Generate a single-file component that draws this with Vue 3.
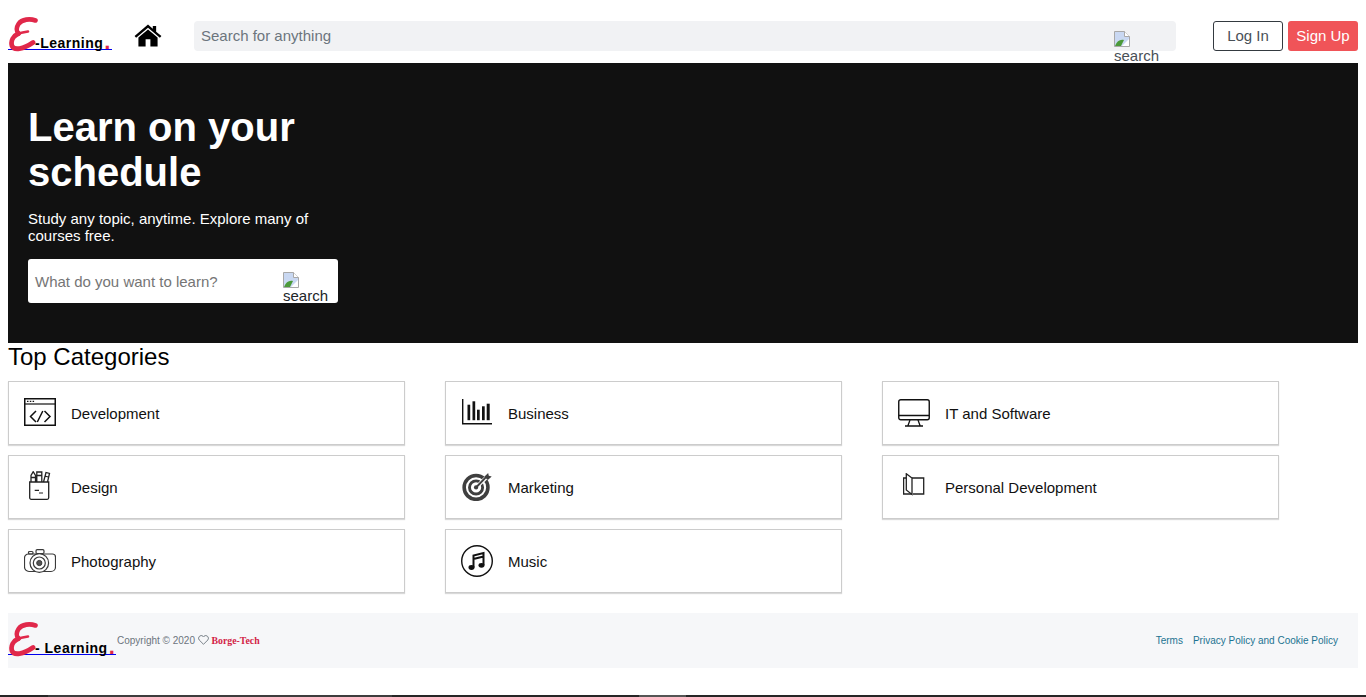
<script setup>
const categories = [
  { name: 'Development', icon: 'dev' },
  { name: 'Business', icon: 'biz' },
  { name: 'IT and Software', icon: 'it' },
  { name: 'Design', icon: 'design' },
  { name: 'Marketing', icon: 'mkt' },
  { name: 'Personal Development', icon: 'book' },
  { name: 'Photography', icon: 'photo' },
  { name: 'Music', icon: 'music' },
]
</script>

<template>
  <div class="page">
    <header class="nav">
      <a class="brand">
        <svg class="mark" viewBox="0 0 29 35" width="29" height="35">
          <g fill="none" stroke="#e0284a" stroke-linecap="round" stroke-linejoin="round">
            <path d="M26.500 3.500C21 1.500 13 2 9.500 7C7.500 10 7 14 9.500 16.500" stroke-width="4.600" />
            <path d="M9.500 16.500C13 15.500 16 15 19 14.500" stroke-width="2.600" />
            <path d="M9.500 16.500C4 19 1.500 24 3 29C5 33.500 14 32.500 24 25.500" stroke-width="4.800" />
          </g>
        </svg>
        <span class="word">-Learning</span><span class="dot">.</span>
      </a>
      <svg class="home" viewBox="0 0 28 24" width="28" height="23">
        <path d="M14 .5 0 12.500l1.600 1.900L14 4l12.400 10.400 1.600-1.900L22.500 8V2h-3.500v3z" fill="#000" />
        <path d="M14 5.700 4 14v9.500h7.500V16h5v7.500H24V14z" fill="#000" />
      </svg>
      <div class="search">
        <span class="placeholder">Search for anything</span>
        <span class="broken top-broken">
          <svg viewBox="0 0 16 16" width="16" height="16">
            <path d="M.5.500h10l5 5v10H.5z" fill="#c9d8f2" stroke="#a8a8a8" />
            <path d="M10.500.500v5h5" fill="#fff" stroke="#a8a8a8" />
            <path d="M1 15c2-5 5-7 9-6l-3 6z" fill="#4c9a3a" />
            <path d="M8 15l7-7v7z" fill="#fff" />
          </svg>
          <span class="alt">search</span>
        </span>
      </div>
      <button class="login">Log In</button>
      <button class="signup">Sign Up</button>
    </header>

    <section class="hero">
      <h1>Learn on your schedule</h1>
      <p>Study any topic, anytime. Explore many of courses free.</p>
      <div class="hero-search">
        <span class="hero-placeholder">What do you want to learn?</span>
        <span class="broken hero-broken">
          <svg viewBox="0 0 16 16" width="16" height="16">
            <path d="M.5.500h10l5 5v10H.5z" fill="#c9d8f2" stroke="#a8a8a8" />
            <path d="M10.500.500v5h5" fill="#fff" stroke="#a8a8a8" />
            <path d="M1 15c2-5 5-7 9-6l-3 6z" fill="#4c9a3a" />
            <path d="M8 15l7-7v7z" fill="#fff" />
          </svg>
          <span class="hero-alt">search</span>
        </span>
      </div>
    </section>

    <h2>Top Categories</h2>
    <div class="grid">
      <div v-for="c in categories" :key="c.name" class="card">
        <div class="ico">
          <svg v-if="c.icon === 'dev'" class="i-dev" viewBox="0 0 32 28" width="32" height="28" fill="none" stroke="#111">
            <rect x=".75" y=".75" width="30.500" height="26.500" stroke-width="1.500" />
            <path d="M1 6h30" stroke-width="1.200" />
            <path d="M3 3.300h1.500M5.800 3.300h1.500M8.600 3.300h1.500" stroke-width="1.300" />
            <path d="M12 13 6.500 18.500l5.500 5.500M20.500 13l5.500 5.500-5.500 5.500M18.800 13l-5.500 11" stroke-width="1.500" />
          </svg>
          <svg v-else-if="c.icon === 'biz'" class="i-biz" viewBox="0 0 30 26" width="30" height="26" fill="none" stroke="#111">
            <path d="M.7 0v24.700H30" stroke-width="1.400" />
            <rect x="5.500" y="5.700" width="2.700" height="15.500" fill="#111" stroke="none" />
            <rect x="10.500" y="2.300" width="2.700" height="18.900" fill="#111" stroke="none" />
            <rect x="15" y="10.700" width="2.700" height="10.500" fill="#111" stroke="none" />
            <rect x="20" y="7.300" width="2.700" height="13.900" fill="#111" stroke="none" />
            <rect x="24.700" y="4.700" width="3" height="16.500" fill="#111" stroke="none" />
          </svg>
          <svg v-else-if="c.icon === 'it'" viewBox="0 0 32 28" width="32" height="28" fill="none" stroke="#111">
            <rect x=".75" y=".75" width="30.500" height="20" rx="2" stroke-width="1.400" />
            <path d="M1 16.500h30M12 21 10 26.500M20 21l2 5.500M7 27h18" stroke-width="1.300" />
          </svg>
          <svg v-else-if="c.icon === 'design'" class="i-design" viewBox="0 0 22 29" width="22" height="29" fill="none" stroke="#222">
            <path d="M.7 11h19v15.800a1.500 1.500 0 0 1-1.500 1.500H2.200a1.500 1.500 0 0 1-1.500-1.500z" stroke-width="1.300" />
            <path d="M5.700 19.300h4.300M10 22h4" stroke-width="1.200" />
            <path d="M2 11V4.500L4.200.7l2.300 3.800V11M2 6.500h4.500M7.800 11V1h5v10M7.800 4.500h5M14.500 11 17 1.500l3.500 1L18.500 11M15.800 5l3.500 1" stroke-width="1.300" />
          </svg>
          <svg v-else-if="c.icon === 'mkt'" class="i-mkt" viewBox="0 0 32 30" width="31" height="29" fill="none" stroke="#3f3f3f">
            <circle cx="14.500" cy="16" r="12.300" stroke-width="3.700" />
            <circle cx="14.500" cy="16" r="6.800" stroke-width="3" />
            <circle cx="14.500" cy="16" r="2.200" fill="#3f3f3f" stroke="none" />
            <path d="M17 13.500 29 2" stroke="#fff" stroke-width="4" />
            <path d="M15 15.500 25 5" stroke-width="2" />
            <path d="m23 5 4-4 .7 3 3 .7-4 3.500z" fill="#3f3f3f" stroke="none" />
          </svg>
          <svg v-else-if="c.icon === 'book'" class="i-book" viewBox="0 0 22 23" width="22" height="23" fill="none" stroke="#222">
            <path d="M3.300 5H.6v16H9" stroke-width="1.300" />
            <path d="M3.300.7 9 5v16.500L3.300 17z" stroke-width="1.300" />
            <path d="M9 5h11.700v16H10" stroke-width="1.300" />
          </svg>
          <svg v-else-if="c.icon === 'photo'" viewBox="0 0 32 24" width="32" height="24" fill="none" stroke="#3a3a3a">
            <path d="M4.500 5h24a3 3 0 0 1 3 3v10a4.500 4.500 0 0 1-4.500 4.500H5A4.500 4.500 0 0 1 .5 18V9a4 4 0 0 1 4-4z" stroke-width="1.200" />
            <circle cx="15.300" cy="14" r="9.300" fill="#fff" stroke-width="1.200" />
            <circle cx="15.300" cy="14" r="6" stroke-width="1.200" />
            <circle cx="15.300" cy="14" r="2.600" fill="#555" stroke-width="1" />
            <rect x="12" y=".7" width="8" height="3.800" rx="1.200" stroke-width="1.200" />
            <rect x="4.500" y="2.500" width="4.500" height="2.500" rx="1" stroke-width="1.200" />
          </svg>
          <svg v-else viewBox="0 0 32 32" width="32" height="32" fill="none" stroke="#111">
            <circle cx="16" cy="16" r="15.300" stroke-width="1.400" />
            <path d="M12.500 22.500V10.500l10-2.500v12M12.500 14l10-2.500" stroke-width="2" />
            <ellipse cx="10.500" cy="22.500" rx="3" ry="2.400" fill="#111" stroke="none" />
            <ellipse cx="20.500" cy="20.300" rx="3" ry="2.400" fill="#111" stroke="none" />
          </svg>
        </div>
        <span class="label">{{ c.name }}</span>
      </div>
    </div>

    <footer class="foot">
      <div class="foot-left">
        <a class="brand foot-brand">
          <svg class="mark" viewBox="0 0 29 35" width="29" height="35">
            <g fill="none" stroke="#e0284a" stroke-linecap="round" stroke-linejoin="round">
              <path d="M26.500 3.500C21 1.500 13 2 9.500 7C7.500 10 7 14 9.500 16.500" stroke-width="4.600" />
              <path d="M9.500 16.500C13 15.500 16 15 19 14.500" stroke-width="2.600" />
              <path d="M9.500 16.500C4 19 1.500 24 3 29C5 33.500 14 32.500 24 25.500" stroke-width="4.800" />
            </g>
          </svg>
          <span class="word">- Learning</span><span class="dot">.</span>
        </a>
        <span class="copy">Copyright © 2020 <svg class="heart" viewBox="0 0 11 10" width="11" height="10" fill="none" stroke="#6c757d"><path d="M5.500 9.300 1.200 5A2.700 2.700 0 0 1 5 1.200l.5.600.5-.6A2.700 2.700 0 0 1 9.800 5z" stroke-width=".9" /></svg> <b class="borge">Borge-Tech</b></span>
      </div>
      <div class="foot-links">
        <a>Terms</a>
        <a>Privacy Policy and Cookie Policy</a>
      </div>
    </footer>
    <div class="bottom-line">
      <i class="seg seg-a"></i>
      <i class="seg seg-b"></i>
    </div>
  </div>
</template>

<style>
html, body { margin: 0; background: #fff; }
</style>

<style scoped>
.page {
  height: 697px;
  overflow: hidden;
  padding: 0 8px;
  box-sizing: border-box;
  position: relative;
  font-family: "Liberation Sans", Arial, sans-serif;
  color: #000;
}
.nav {
  height: 63px;
  padding-top: 21px;
  box-sizing: border-box;
  display: flex;
  align-items: flex-start;
}
.brand {
  display: flex;
  align-items: flex-end;
  height: 32px;
  width: 104px;
  margin-top: -4px;
  border-bottom: 1px solid #00e;
  box-sizing: content-box;
  color: #000;
  font-weight: 700;
  font-size: 14px;
  letter-spacing: 0.5px;
  flex: none;
}
.mark { flex: none; margin-left: 1px; margin-right: -3px; align-self: flex-start; }
.word { line-height: 12px; }
.dot {
  color: #e0284a;
  margin-left: 1px;
  margin-bottom: 1px;
  font-size: 22px;
  line-height: 12px;
}
.home { margin-left: 22px; margin-top: 3px; flex: none; }
.search {
  margin-left: 32px;
  width: 982px;
  height: 30px;
  background: #f1f2f4;
  border-radius: 4px;
  flex: none;
  display: flex;
  align-items: center;
  position: relative;
  padding: 0 0 2px 7px;
  box-sizing: border-box;
  color: #6c757d;
  font-size: 15px;
}
.broken {
  position: absolute;
  display: flex;
  flex-direction: column;
  line-height: 16px;
  font-size: 15px;
}
.top-broken { left: 920px; top: 10px; color: #495057; }
.alt { margin-top: 1px; }
.hero-alt { margin-top: 0; }
.login, .signup {
  height: 30px;
  font: 15px "Liberation Sans", Arial, sans-serif;
  border-radius: 3px;
  box-sizing: border-box;
  padding: 0 0 2px;
  flex: none;
}
.login {
  margin-left: 37px;
  width: 70px;
  background: #fff;
  border: 1px solid #343a40;
  color: #495057;
}
.signup {
  margin-left: 5px;
  width: 70px;
  background: #f05458;
  border: none;
  color: #fff;
}
.hero {
  height: 280px;
  background: #111;
  color: #fff;
  padding: 42px 20px 0;
  box-sizing: border-box;
}
h1 {
  margin: 0;
  width: 310px;
  font-size: 40px;
  line-height: 45px;
  font-weight: 700;
}
.hero p {
  margin: 15px 0 0;
  width: 310px;
  font-size: 15px;
  line-height: 17px;
}
.hero-search {
  margin-top: 15px;
  width: 310px;
  height: 44px;
  background: #fff;
  border-radius: 3px;
  position: relative;
  display: flex;
  align-items: center;
  padding-left: 7px;
  box-sizing: border-box;
  color: #757575;
  font-size: 15px;
}
.hero-broken { left: 255px; top: 13px; color: #212529; }
h2 {
  margin: 0;
  height: 38px;
  font-size: 24px;
  font-weight: 400;
  line-height: 28px;
}
.grid {
  display: grid;
  grid-template-columns: repeat(3, 397px);
  column-gap: 40px;
  row-gap: 10px;
}
.card {
  height: 64px;
  box-sizing: border-box;
  border: 1px solid #ccc;
  box-shadow: 0 1px 1px rgba(0, 0, 0, .15);
  display: flex;
  align-items: center;
  padding-left: 15px;
  background: #fff;
}
.ico {
  width: 32px;
  height: 32px;
  flex: none;
  margin-right: 15px;
  display: flex;
  align-items: center;
  justify-content: center;
}
.i-dev, .i-biz { margin-top: -2px; }
.i-design { margin-top: -4px; }
.i-mkt { margin-top: -2px; }
.i-book { margin-top: -6px; }
.label { font-size: 15px; color: #111; margin-top: 1px; }
.foot {
  margin-top: 20px;
  height: 55px;
  background: #f6f7f9;
  display: flex;
  align-items: center;
  justify-content: space-between;
  padding-right: 20px;
}
.foot-left { display: flex; align-items: flex-start; align-self: flex-start; padding-top: 9px; }
.foot-brand { width: 108px; margin-top: 0; }
.copy { font-size: 10px; line-height: 12px; color: #6c757d; margin-top: 13px; margin-left: 1px; }
.heart { vertical-align: -1px; }
.borge { font-family: "Liberation Serif", serif; color: #d31f47; font-size: 9.800px; }
.foot-links { font-size: 10px; color: #1c7391; display: flex; gap: 10px; }
.bottom-line {
  position: absolute;
  left: 0;
  right: 0;
  bottom: 0;
  height: 2px;
  background: #262626;
}
.seg { position: absolute; top: 0; height: 2px; background: #3d3d3d; }
.seg-a { left: 48px; width: 344px; }
.seg-b { left: 639px; width: 47px; background: #555; }
</style>
